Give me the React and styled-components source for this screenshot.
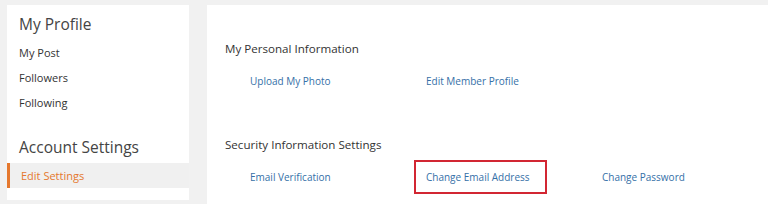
import React from 'react'
import styled, { createGlobalStyle } from 'styled-components'

const Global = createGlobalStyle`
  html, body { margin: 0; padding: 0; background: #f1f1f1; }
  body { font-family: "Open Sans", "Liberation Sans", sans-serif; }
`

const Page = styled.div`
  display: flex;
  gap: 18px;
  padding: 5px 0 0 7px;
  height: 199px;
  overflow: hidden;
`

const Sidebar = styled.aside`
  width: 182px;
  height: 195px;
  background: #fff;
  flex-shrink: 0;
`

const SideTitle = styled.h2`
  margin: 0;
  padding: ${props => props.pad};
  font-size: 15.5px;
  font-weight: 400;
  color: #444;
  line-height: 24px;
`

const SideLink = styled.a`
  display: block;
  padding-left: 12px;
  font-size: 11px;
  color: #333;
  line-height: 25px;
  text-decoration: none;
`

const ActiveLink = styled.a`
  display: block;
  height: 25px;
  line-height: 25px;
  background: #f0f0f0;
  border-left: 3px solid #e5782e;
  padding-left: 11px;
  font-size: 11px;
  color: #e5782e;
  text-decoration: none;
`

const Main = styled.main`
  flex: 1;
  background: #fff;
  padding: 32px 0 0 18px;
`

const Section = styled.section`
  margin-bottom: ${props => props.gap};
`

const SectionTitle = styled.h3`
  margin: 0 0 10px;
  font-size: 11.6px;
  font-weight: 400;
  color: #333;
  line-height: 24px;
`

const LinkRow = styled.div`
  display: grid;
  grid-template-columns: 176px 176px 176px;
  padding-left: 25px;
`

const ActionLink = styled.a`
  display: block;
  font-size: 10px;
  color: #3570a7;
  line-height: 20px;
  text-decoration: none;
  white-space: nowrap;
`

const Highlight = styled.span`
  display: block;
  width: fit-content;
  margin: -7px 0 -7px -12px;
  padding: 5px 15px 5px 10px;
  border: 2px solid #d22632;
`

export default function App() {
  return (
    <>
      <Global />
      <Page>
        <Sidebar>
          <SideTitle pad="7px 12px 4px">My Profile</SideTitle>
          <SideLink>My Post</SideLink>
          <SideLink>Followers</SideLink>
          <SideLink>Following</SideLink>
          <SideTitle pad="20px 12px 4px">Account Settings</SideTitle>
          <ActiveLink>Edit Settings</ActiveLink>
        </Sidebar>
        <Main>
          <Section gap="42px">
            <SectionTitle>My Personal Information</SectionTitle>
            <LinkRow>
              <ActionLink>Upload My Photo</ActionLink>
              <ActionLink>Edit Member Profile</ActionLink>
            </LinkRow>
          </Section>
          <Section>
            <SectionTitle>Security Information Settings</SectionTitle>
            <LinkRow>
              <ActionLink>Email Verification</ActionLink>
              <ActionLink>
                <Highlight>Change Email Address</Highlight>
              </ActionLink>
              <ActionLink>Change Password</ActionLink>
            </LinkRow>
          </Section>
        </Main>
      </Page>
    </>
  )
}
